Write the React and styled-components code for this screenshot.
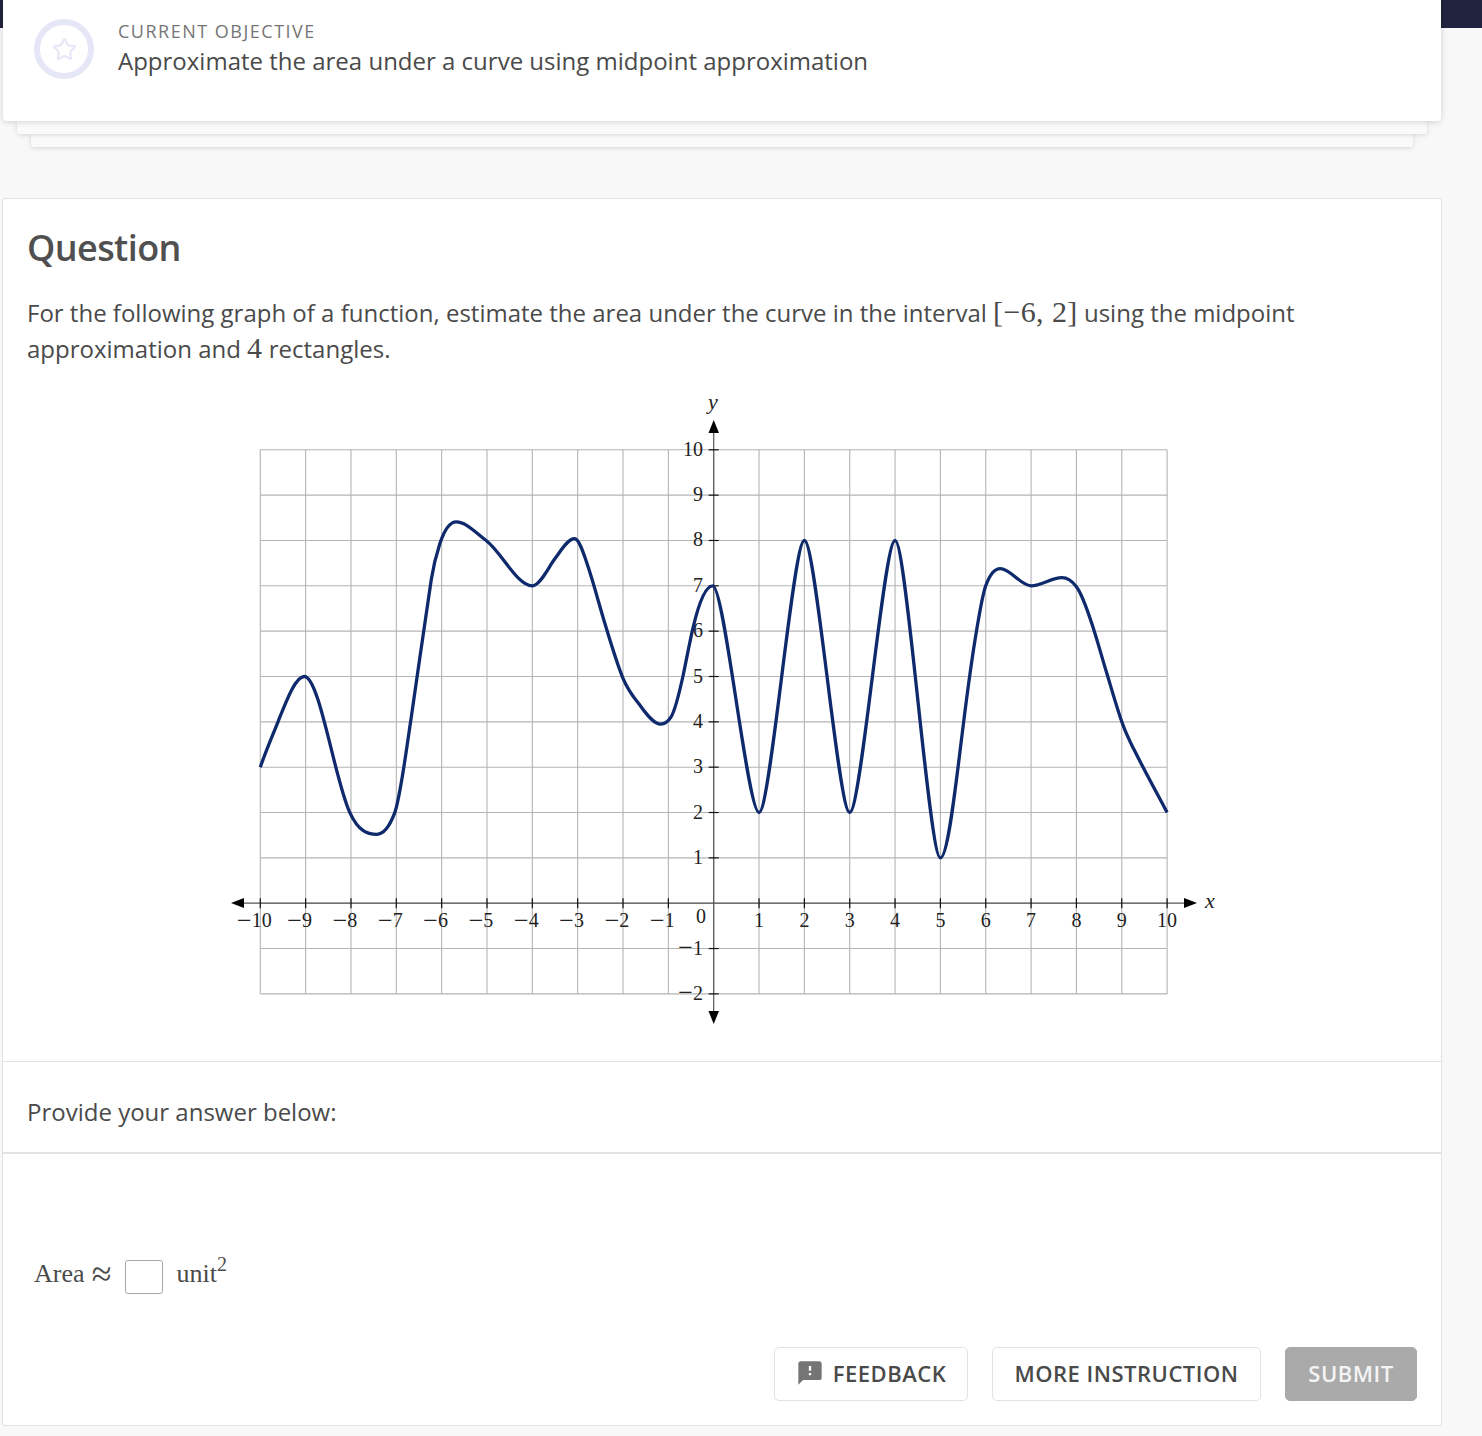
import React from 'react';
import styled, { createGlobalStyle } from 'styled-components';
import { Star } from 'lucide-react';

const GlobalStyle = createGlobalStyle`
  html, body {
    margin: 0;
    padding: 0;
    background: #f8f8f8;
  }
  * {
    box-sizing: border-box;
  }
`;

const Page = styled.div`
  height: 1436px;
  overflow: hidden;
  padding: 0 41px 0 3px;
  background: linear-gradient(#21233f 28px, #f8f8f8 28px);
  font-family: "Open Sans", "Liberation Sans", sans-serif;
  color: #4a4a4a;
`;

const ObjectiveCard = styled.div`
  display: flex;
  align-items: flex-start;
  gap: 24px;
  height: 121px;
  padding: 19px 31px;
  background: #fff;
  border-radius: 0 0 4px 4px;
  box-shadow: 0 1px 6px rgba(0, 0, 0, 0.16);
  position: relative;
  z-index: 3;
`;

const StackLayer = styled.div`
  height: 13px;
  margin: 0 ${(p) => p.$inset}px;
  background: #fafafa;
  border-radius: 0 0 3px 3px;
  box-shadow: 0 1px 5px rgba(0, 0, 0, 0.14);
  position: relative;
  z-index: ${(p) => p.$level};
`;

const StarCircle = styled.div`
  display: flex;
  align-items: center;
  justify-content: center;
  flex-shrink: 0;
  width: 60px;
  height: 60px;
  border: 6px solid #e5e7f6;
  border-radius: 50%;
  color: #e5e7f6;
`;

const ObjectiveText = styled.div`
  display: flex;
  flex-direction: column;
  margin-top: -1px;
`;

const ObjectiveLabel = styled.div`
  font-size: 18px;
  line-height: 26px;
  letter-spacing: 1.5px;
  color: #757575;
`;

const ObjectiveTitle = styled.div`
  font-size: 24px;
  line-height: 34px;
  color: #4a4a4a;
`;

const Panel = styled.div`
  margin: 51px -1px 0;
  height: 1228px;
  background: #fff;
  border: 1px solid #e2e2e2;
  border-radius: 3px;
`;

const QuestionSection = styled.div`
  padding: 25px 24px 21px 24px;
  border-bottom: 1px solid #e2e2e2;
`;

const Heading = styled.h2`
  margin: 0;
  font-size: 36px;
  line-height: 48px;
  font-weight: 600;
  letter-spacing: -0.6px;
  color: #505050;
`;

const Paragraph = styled.p`
  margin: 23px 0 0;
  font-size: 24px;
  line-height: 36px;
  color: #4a4a4a;
`;

const MathText = styled.span`
  font-family: "Liberation Serif", serif;
  font-size: 30px;
  line-height: 0;
  letter-spacing: 0.4px;
`;

const GraphWrap = styled.div`
  display: flex;
  justify-content: center;
  margin: 23px -24px 0;
`;

const PromptSection = styled.div`
  height: 92px;
  padding: 32px 24px 0;
  font-size: 24px;
  line-height: 36px;
  border-bottom: 2px solid #e2e2e2;
`;

const AnswerSection = styled.div`
  display: flex;
  flex-direction: column;
  padding: 106px 24px 0 31px;
`;

const AnswerRow = styled.div`
  display: flex;
  align-items: flex-start;
  height: 34px;
  font-family: "Liberation Serif", serif;
  font-size: 26px;
  line-height: 28px;
  color: #4a4a4a;
`;

const Approx = styled.span`
  width: 22px;
  margin-left: 6px;
  font-size: 36px;
  text-align: center;
`;

const AnswerBox = styled.div`
  width: 38px;
  height: 34px;
  margin: 0 14px 0 12px;
  border: 1px solid #a8a8a8;
  border-radius: 3px;
  background: #fff;
`;

const Sup = styled.sup`
  font-size: 20px;
  line-height: 0;
  vertical-align: 11px;
`;

const ButtonRow = styled.div`
  display: flex;
  justify-content: flex-end;
  gap: 24px;
  margin-top: 53px;
`;

const ActionButton = styled.button`
  display: flex;
  align-items: center;
  justify-content: center;
  gap: 9px;
  height: 54px;
  width: ${(p) => p.$width}px;
  padding: 0 0 2px;
  border: 1px solid ${(p) => (p.$disabled ? '#aaa' : '#e2e2e2')};
  border-radius: 5px;
  background: ${(p) => (p.$disabled ? '#aaa' : '#fff')};
  color: ${(p) => (p.$disabled ? '#f4f4f4' : '#4a4a4a')};
  font-family: "Open Sans", "Liberation Sans", sans-serif;
  font-size: 22px;
  font-weight: 600;
  letter-spacing: 0.5px;
`;

const CURVE = '#0e2a6c';
const OX = 713.7;
const OY = 903.2;
const UNIT = 45.34;

const px = (x) => OX + x * UNIT;
const py = (y) => OY - y * UNIT;

const xs = Array.from({ length: 21 }, (_, i) => i - 10);
const ys = Array.from({ length: 13 }, (_, i) => i - 2);

// x, y, slope (math units)
const knots = [
  [-10, 3, 2.9], [-9.61, 4, 2.5], [-9.03, 5, 0], [-8.03, 2.01, -2.2], [-7.43, 1.52, 0],
  [-7.04, 1.98, 2.6], [-6.67, 4.11, 6.7], [-6.23, 7.13, 6.4], [-6.04, 7.93, 3], [-5.68, 8.41, 0],
  [-5.02, 8, -0.75], [-4, 7, 0], [-3.5, 7.6, 1.35], [-3.07, 8.04, 0],
  [-2.77, 7.42, -3], [-2.4, 6.17, -3.3], [-2, 4.96, -2.4], [-1.6, 4.33, -1.35], [-1.17, 3.95, 0],
  [-0.94, 4.11, 1.6], [-0.68, 5, 4.6], [-0.45, 6.1, 4.2], [-0.02, 7, 0],
  [1, 2, 0], [2, 8, 0], [3, 2, 0], [4, 8, 0], [5, 1, 0],
  [5.5, 3.9, 8], [5.8, 6.03, 6], [6, 7, 2.8], [6.32, 7.38, 0], [7, 7, 0],
  [7.68, 7.18, 0], [8, 6.98, -1.3], [8.34, 6.17, -3], [8.67, 5.07, -3.3], [9, 4, -2.9],
  [9.26, 3.41, -2], [10, 2, -1.9],
];

// hermite knots to cubic beziers
const curvePath = () => {
  let d = `M${px(knots[0][0]).toFixed(1)} ${py(knots[0][1]).toFixed(1)}`;
  for (let i = 1; i < knots.length; i++) {
    const [x0, y0, m0] = knots[i - 1];
    const [x1, y1, m1] = knots[i];
    const h = (x1 - x0) / 3;
    // the tall peaks are narrow, pull the handles in
    const k = m0 === 0 && m1 === 0 && Math.abs(y1 - y0) > 2 ? 0.75 : 1;
    const c1x = px(x0 + h * k);
    const c1y = py(y0 + m0 * h);
    const c2x = px(x1 - h * k);
    const c2y = py(y1 - m1 * h);
    d += `C${c1x.toFixed(1)} ${c1y.toFixed(1)} ${c2x.toFixed(1)} ${c2y.toFixed(1)} ${px(x1).toFixed(1)} ${py(y1).toFixed(1)}`;
  }
  return d;
};

const GridLine = styled.line`
  stroke: #b4b4b4;
  stroke-width: 1.1;
`;

const AxisLine = styled.line`
  stroke: #555;
  stroke-width: 1.2;
`;

const Tick = styled.line`
  stroke: #111;
  stroke-width: 1.2;
`;

const TickLabel = styled.text`
  font-family: "Liberation Serif", serif;
  font-size: 20px;
  fill: #222;
`;

const Minus = styled.tspan`
  font-size: 26px;
`;

const AxisName = styled.text`
  font-family: "Liberation Serif", serif;
  font-style: italic;
  font-size: 22px;
  fill: #222;
`;

const label = (n) => (n < 0
  ? <><Minus dy="1.5">{'\u2212'}</Minus><tspan dy="-1.5">{-n}</tspan></>
  : n);

const Graph = () => (
  <svg width="990" height="650" viewBox="227 390 990 650">
    {xs.map((x) => (
      <GridLine key={x} x1={px(x)} x2={px(x)} y1={py(10)} y2={py(-2)} />
    ))}
    {ys.map((y) => (
      <GridLine key={y} x1={px(-10)} x2={px(10)} y1={py(y)} y2={py(y)} />
    ))}
    <AxisLine x1={235} x2={1193} y1={OY} y2={OY} />
    <AxisLine x1={OX} x2={OX} y1={424} y2={1020} />
    {xs.filter((x) => x !== 0).map((x) => (
      <Tick key={x} x1={px(x)} x2={px(x)} y1={OY - 5} y2={OY + 5} />
    ))}
    {ys.filter((y) => y !== 0).map((y) => (
      <Tick key={y} x1={OX - 5} x2={OX + 5} y1={py(y)} y2={py(y)} />
    ))}
    <polygon points="231,903 244,898 244,908" fill="#000" />
    <polygon points="1197,903 1184,898 1184,908" fill="#000" />
    <polygon points="713.7,420 708.5,433 719,433" fill="#000" />
    <polygon points="713.7,1024 708.5,1011 719,1011" fill="#000" />
    {xs.filter((x) => x !== 0).map((x) => (
      <TickLabel key={x} x={x < 0 ? px(x) - 6 : px(x)} y={927} textAnchor="middle">
        {label(x)}
      </TickLabel>
    ))}
    <TickLabel x={701} y={923} textAnchor="middle">0</TickLabel>
    {ys.filter((y) => y !== 0).map((y) => (
      <TickLabel key={y} x={703} y={py(y) + 6} textAnchor="end">
        {label(y)}
      </TickLabel>
    ))}
    <AxisName x={713} y={409} textAnchor="middle">y</AxisName>
    <AxisName x={1210} y={908} textAnchor="middle">x</AxisName>
    <path d={curvePath()} fill="none" stroke={CURVE} strokeWidth="3.3" strokeLinejoin="round" />
  </svg>
);

const FeedbackIcon = () => (
  <svg width="28" height="28" viewBox="0 0 24 24" fill="#757575">
    <path d="M20 2H4c-1.1 0-1.99.9-1.99 2L2 22l4-4h14c1.1 0 2-.9 2-2V4c0-1.1-.9-2-2-2zm-7 12h-2v-2h2v2zm0-4h-2V6h2v4z" />
  </svg>
);

const App = () => {
  return (
    <Page>
      <GlobalStyle />
      <ObjectiveCard>
        <StarCircle>
          <Star size={25} strokeWidth={2} />
        </StarCircle>
        <ObjectiveText>
          <ObjectiveLabel>CURRENT OBJECTIVE</ObjectiveLabel>
          <ObjectiveTitle>Approximate the area under a curve using midpoint approximation</ObjectiveTitle>
        </ObjectiveText>
      </ObjectiveCard>
      <StackLayer $inset={14} $level={2} />
      <StackLayer $inset={28} $level={1} />
      <Panel>
        <QuestionSection>
          <Heading>Question</Heading>
          <Paragraph>
            For the following graph of a function, estimate the area under the curve in the interval{' '}
            <MathText>[−6, 2]</MathText> using the midpoint approximation and <MathText>4</MathText> rectangles.
          </Paragraph>
          <GraphWrap>
            <Graph />
          </GraphWrap>
        </QuestionSection>
        <PromptSection>Provide your answer below:</PromptSection>
        <AnswerSection>
          <AnswerRow>
            <span>Area</span>
            <Approx>≈</Approx>
            <AnswerBox />
            <span>unit<Sup>2</Sup></span>
          </AnswerRow>
          <ButtonRow>
            <ActionButton $width={194}>
              <FeedbackIcon />
              FEEDBACK
            </ActionButton>
            <ActionButton $width={269}>MORE INSTRUCTION</ActionButton>
            <ActionButton $width={132} $disabled>SUBMIT</ActionButton>
          </ButtonRow>
        </AnswerSection>
      </Panel>
    </Page>
  );
};

export default App;
